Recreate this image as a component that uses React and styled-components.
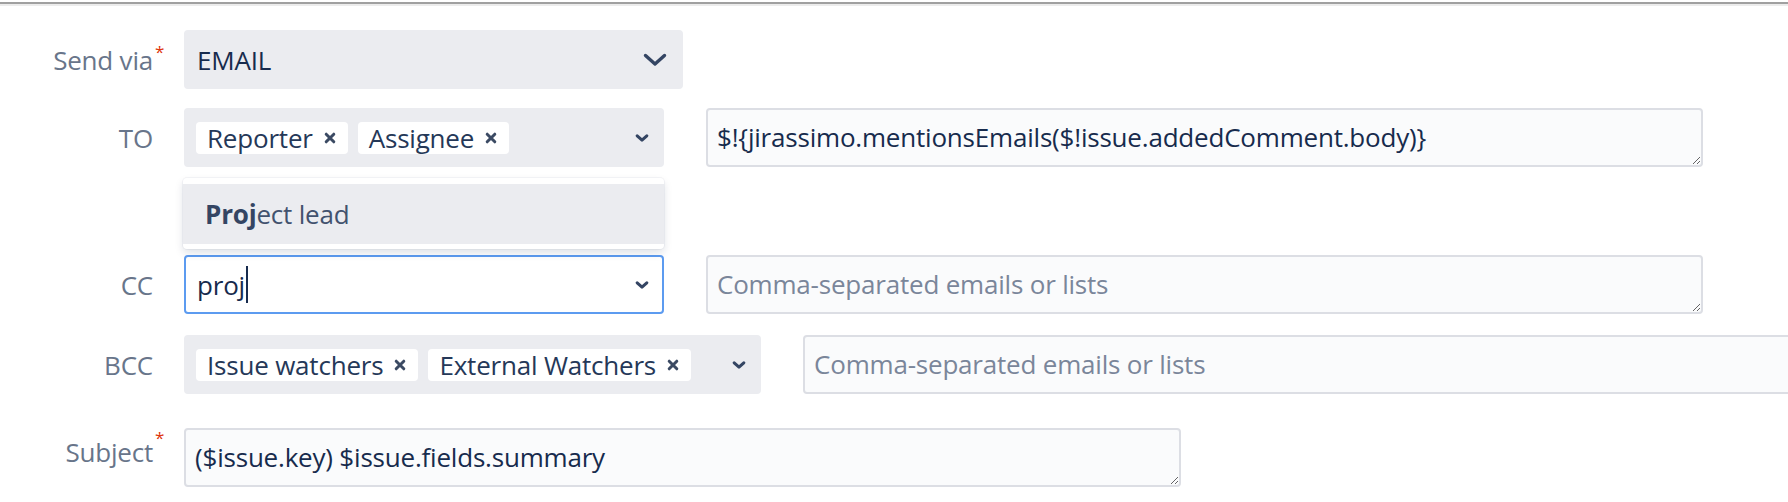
import React from 'react';
import styled, { createGlobalStyle } from 'styled-components';

const GlobalStyle = createGlobalStyle`
  html, body { margin: 0; padding: 0; background: #fff; overflow: hidden; }
  body { font-family: "Open Sans", "Noto Sans", sans-serif; }
`;

const Page = styled.div`
  width: 1788px;
  height: 502px;
  box-sizing: border-box;
  padding-top: 2px;
  overflow: hidden;
  background: #fff;
`;

const TopRule = styled.div`
  height: 2px;
  background: #a0a0a0;
  border-bottom: 2px solid #ececec;
`;

const Form = styled.div`
  display: flex;
  flex-direction: column;
  padding-top: 24px;
`;

const Row = styled.div`
  display: grid;
  grid-template-columns: 153px auto;
  column-gap: 31px;
  align-items: center;
  margin-top: ${p => p.$gap || 0}px;
`;

const Label = styled.label`
  justify-self: end;
  position: relative;
  font-size: 26px;
  line-height: 32px;
  color: #68758a;
  white-space: nowrap;
  letter-spacing: -0.2px;
  margin-bottom: ${p => (p.$raise ? 12 : 0)}px;
`;

const Required = styled.span`
  position: absolute;
  left: calc(100% + 2px);
  top: ${p => (p.$high ? -7 : -1)}px;
  font-size: 17px;
  line-height: 17px;
  color: #de350b;
`;

const Fields = styled.div`
  display: flex;
  align-items: center;
  gap: 42px;
`;

const Select = styled.div`
  position: relative;
  box-sizing: border-box;
  display: flex;
  align-items: center;
  height: 59px;
  min-width: ${p => p.$minWidth}px;
  padding: 0 13px 0 10px;
  background: ${p => (p.$focused ? '#fff' : '#ebecf0')};
  border: 2px solid ${p => (p.$focused ? '#5c9bf0' : '#ebecf0')};
  border-radius: 4px;
  flex-shrink: 0;
`;

const Values = styled.div`
  flex: 1;
  display: flex;
  align-items: center;
  gap: 10px;
`;

const ValueText = styled.span`
  display: inline-flex;
  align-items: center;
  padding-left: 1px;
  font-size: 26px;
  line-height: 32px;
  color: #172b4d;
  letter-spacing: -0.2px;
`;

const Caret = styled.span`
  display: inline-block;
  width: 0;
  height: 37px;
  margin-left: 1px;
  border-left: 2px solid #172b4d;
`;

const Pill = styled.span`
  display: inline-flex;
  align-items: center;
  gap: 11px;
  height: 32px;
  padding: 0 12px 0 11px;
  background: #fff;
  border-radius: 4px;
  font-size: 26px;
  line-height: 32px;
  color: #253858;
  white-space: nowrap;
  letter-spacing: -0.2px;
`;

const Indicator = styled.span`
  display: flex;
  align-items: center;
  margin-left: ${p => (p.$large ? 20 : 41)}px;
  margin-right: ${p => (p.$large ? 1 : 0)}px;
  color: #344563;
`;

const Menu = styled.div`
  position: absolute;
  left: -3px;
  right: -2px;
  bottom: calc(100% + 8px);
  padding: 6px 0 5px;
  background: #fff;
  border-radius: 4px;
  box-shadow: 0 4px 9px rgba(9, 30, 66, 0.13), 0 0 0 1px rgba(9, 30, 66, 0.04);
  z-index: 2;
`;

const Option = styled.div`
  display: flex;
  align-items: center;
  height: 60px;
  padding: 0 22px;
  background: #ebecf0;
  font-size: 26px;
  color: #42526e;
  white-space: nowrap;
  letter-spacing: -0.2px;
`;

const Match = styled.b`
  font-weight: 700;
  color: #344563;
`;

const TextArea = styled.textarea`
  box-sizing: border-box;
  flex-shrink: 0;
  width: 997px;
  height: 59px;
  padding: 10px 9px;
  border: 2px solid #dcdee4;
  border-radius: 4px;
  background: #fafbfc;
  font-family: "Open Sans", "Noto Sans", sans-serif;
  font-size: 26px;
  line-height: 35px;
  letter-spacing: -0.2px;
  color: #172b4d;
  resize: vertical;
  outline: none;
  overflow: hidden;
  &::placeholder {
    color: #7a869a;
    opacity: 1;
  }
`;

const ChevronLarge = () => (
  <svg width="24" height="14" viewBox="0 0 24 14" aria-hidden="true">
    <polyline points="2.5,2.5 12,11 21.5,2.5" fill="none" stroke="currentColor" strokeWidth="3.4" strokeLinecap="round" strokeLinejoin="round" />
  </svg>
);

const ChevronSmall = () => (
  <svg width="14" height="8" viewBox="0 0 14 8" aria-hidden="true">
    <polyline points="2.2,1.8 7,6.2 11.8,1.8" fill="none" stroke="currentColor" strokeWidth="3" strokeLinecap="round" strokeLinejoin="round" />
  </svg>
);

const RemoveIcon = () => (
  <svg width="12" height="12" viewBox="0 0 12 12" aria-hidden="true">
    <path d="M2.2 2.2 L9.8 9.8 M9.8 2.2 L2.2 9.8" stroke="#3b4a63" strokeWidth="3" strokeLinecap="round" />
  </svg>
);

const Chip = ({ children }) => (
  <Pill>
    {children}
    <RemoveIcon />
  </Pill>
);

const PLACEHOLDER = 'Comma-separated emails or lists';

export default function App() {
  return (
    <Page>
      <GlobalStyle />
      <TopRule />
      <Form>
        <Row>
          <Label>
            Send via<Required>*</Required>
          </Label>
          <Fields>
            <Select $minWidth={499}>
              <Values>
                <ValueText>EMAIL</ValueText>
              </Values>
              <Indicator $large>
                <ChevronLarge />
              </Indicator>
            </Select>
          </Fields>
        </Row>

        <Row $gap={19}>
          <Label>TO</Label>
          <Fields>
            <Select $minWidth={480}>
              <Values>
                <Chip>Reporter</Chip>
                <Chip>Assignee</Chip>
              </Values>
              <Indicator>
                <ChevronSmall />
              </Indicator>
            </Select>
            <TextArea defaultValue="$!{jirassimo.mentionsEmails($!issue.addedComment.body)}" />
          </Fields>
        </Row>

        <Row $gap={88}>
          <Label>CC</Label>
          <Fields>
            <Select $minWidth={480} $focused>
              <Menu>
                <Option>
                  <Match>Proj</Match>ect lead
                </Option>
              </Menu>
              <Values>
                <ValueText>
                  proj<Caret />
                </ValueText>
              </Values>
              <Indicator>
                <ChevronSmall />
              </Indicator>
            </Select>
            <TextArea placeholder={PLACEHOLDER} />
          </Fields>
        </Row>

        <Row $gap={21}>
          <Label>BCC</Label>
          <Fields>
            <Select $minWidth={480}>
              <Values>
                <Chip>Issue watchers</Chip>
                <Chip>External Watchers</Chip>
              </Values>
              <Indicator>
                <ChevronSmall />
              </Indicator>
            </Select>
            <TextArea placeholder={PLACEHOLDER} />
          </Fields>
        </Row>

        <Row $gap={34}>
          <Label $raise>
            Subject<Required $high>*</Required>
          </Label>
          <Fields>
            <TextArea defaultValue="($issue.key) $issue.fields.summary" />
          </Fields>
        </Row>
      </Form>
    </Page>
  );
}
